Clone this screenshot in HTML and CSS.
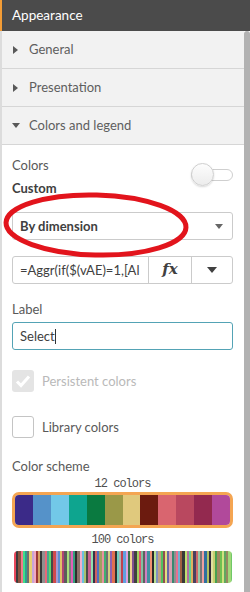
FILE: index.html
```html
<!doctype html>
<html lang="en">
<head>
<meta charset="utf-8">
<title>Appearance</title>
<meta name="viewport" content="width=device-width,initial-scale=1">
<link rel="stylesheet" href="styles.css">
</head>
<body>
<div class="header">Appearance</div>
<div class="main">
  <div class="panel">
    <div class="section"><span class="arrow right"></span>General</div>
    <div class="section"><span class="arrow right"></span>Presentation</div>
    <div class="section"><span class="arrow down"></span>Colors and legend</div>

    <div class="content">
      <div class="colors-head">
        <div>
          <div class="lbl">Colors</div>
          <div class="mode">Custom</div>
        </div>
        <div class="toggle"><span class="knob"></span></div>
      </div>

      <div class="select">By dimension<span class="caret"></span></div>

      <div class="expr">
        <span class="expr-text">=Aggr(if($(vAE)=1,[Al</span>
        <span class="fx">fx</span>
        <span class="expr-drop"><span class="caret big"></span></span>
      </div>

      <div class="lbl label-title">Label</div>
      <div class="text-input">Select<span class="cursor"></span></div>

      <div class="check disabled">
        <span class="box"><svg width="22" height="22" viewBox="0 0 22 22"><path d="M5 11.5l4 4 8-9" fill="none" stroke="#fff" stroke-width="3"/></svg></span>
        Persistent colors
      </div>
      <div class="check lib"><span class="box"></span>Library colors</div>

      <div class="lbl scheme-title">Color scheme</div>
      <div class="caption">12 colors</div>
      <div class="swatch selected" id="c12"></div>
      <div class="caption">100 colors</div>
      <div class="swatch wide" id="c100"></div>
    </div>

    <svg class="ring" width="196" height="72" viewBox="0 0 196 72">
      <ellipse cx="94" cy="35" rx="90" ry="30" fill="none" stroke="#e2141c" stroke-width="5" transform="rotate(1.5 94 35)"/>
    </svg>
  </div>
  <div class="scrollbar"></div>
</div>

<script>
const colors12 = ["#3b2a88","#5592c9","#72c8e8","#0ea58f","#0a7a40","#9a9848","#e0c97d",
  "#6c1b0f","#d9656f","#b9485f","#93294f","#b1499b"];

const colors100 = [
  "#e8485c","#3b3b3b","#8a5440","#f07a8c","#3ee08a","#2f9f8f","#6f6f6f","#e8d070","#c7a4d8","#f0a8c0",
  "#9c3838","#d4a060","#383838","#909090","#e86878","#46a890","#5ad86c","#484848","#d04a4a","#a89ad0",
  "#5a90d0","#e0c068","#b04474","#5c5c5c","#a6e07a","#7c7c7c","#e060b8","#34a07c","#2e2e2e","#8c7068",
  "#f0b0d0","#6ac0e0","#a8c070","#4a4a4a","#c86090","#90e0b0","#383048","#d06060","#5070c0","#a0a060",
  "#e890a0","#40b070","#707070","#d0d080","#9060b0","#e07050","#303030","#70d0c0","#b0b0b0","#c04050",
  "#60a0e0","#e0a0e0","#3c7048","#f0d090","#805090","#404040","#a0d060","#e05070","#80c0a0","#606060",
  "#d080c0","#4090a0","#f09070","#282828","#b8e090","#8090c0","#c0a080","#50c060","#905050","#e0e080",
  "#6868a8","#d8a0b0","#3a8870","#909090","#e87090","#70b0d0","#a06040","#383838","#c0e070","#b070a0",
  "#60d090","#e0b060","#4a4060","#d06868","#98c8a8","#787878","#f0a0a0","#3070a0","#b0c060","#302838",
  "#e0e0a0","#c8d070","#48a050","#a08860","#70c050","#d0e080","#60a860","#988860","#a0d878","#70c868"
];

function fill(id, list) {
  const el = document.getElementById(id);
  for (const c of list) {
    const s = document.createElement("span");
    s.style.background = c;
    el.appendChild(s);
  }
}

fill("c12", colors12);
fill("c100", colors100);
</script>
</body>
</html>
```

FILE: styles.css
```css
body{margin:0;width:250px;height:592px;overflow:hidden;font-family:Lato,"Open Sans",sans-serif;font-size:13px;color:#595959;background:#fff;}

.header{height:31px;line-height:30px;background:#4b4b4b;color:#fff;border-left:2px solid #f39c35;padding-left:10px;font-size:13.5px;box-sizing:border-box;}

.main{display:flex;height:561px;}
.panel{flex:1;position:relative;border-left:2px solid #dcdcdc;background:#fff;}
.scrollbar{width:6px;background:#b2b2b2;border-radius:3px 3px 0 0;}

.section{height:37px;line-height:37px;background:#f2f2f2;border-bottom:1px solid #d6d6d6;padding-left:10px;display:flex;align-items:center;color:#5e5e5e;}
.arrow{width:0;height:0;margin-right:11px;}
.arrow.right{border-left:5px solid #595959;border-top:4px solid transparent;border-bottom:4px solid transparent;margin-left:1px;margin-right:11px;}
.arrow.down{border-top:5px solid #595959;border-left:4px solid transparent;border-right:4px solid transparent;margin-right:9px;}

.content{padding:11px 11px 0 10px;}
.lbl{line-height:18px;}

.colors-head{display:flex;justify-content:space-between;align-items:flex-start;}
.mode{font-weight:700;color:#404040;line-height:18px;margin-top:5px;}
.toggle{position:relative;width:42px;height:23px;margin-top:7px;display:flex;align-items:center;}
.toggle::before{content:"";display:block;width:100%;height:12px;border:1px solid #cfcfcf;border-radius:7px;box-sizing:border-box;background:#fff;}
.knob{position:absolute;left:0;top:0;width:23px;height:23px;border-radius:50%;border:1px solid #cfcfcf;box-sizing:border-box;background:linear-gradient(#fdfdfd,#ececec);box-shadow:0 1px 2px rgba(0,0,0,.15);}

.select{margin-top:15px;height:28px;border:1px solid #cbcbcb;border-radius:3px;box-sizing:border-box;display:flex;align-items:center;justify-content:space-between;padding:0 9px 0 7px;font-weight:700;color:#404040;}
.caret{width:0;height:0;border-top:5px solid #666;border-left:4px solid transparent;border-right:4px solid transparent;}
.caret.big{border-top-width:6px;border-left-width:5px;border-right-width:5px;border-top-color:#404040;}

.expr{margin-top:16px;height:28px;border:1px solid #cbcbcb;border-radius:3px;box-sizing:border-box;display:flex;}
.expr-text{width:135px;padding-left:7px;line-height:26px;white-space:nowrap;overflow:hidden;color:#404040;box-sizing:border-box;}
.fx{width:42px;border-left:1px solid #cbcbcb;text-align:center;font-family:"DejaVu Serif",serif;font-style:italic;font-weight:700;font-size:15px;line-height:25px;color:#404040;}
.expr-drop{flex:1;border-left:1px solid #cbcbcb;display:flex;align-items:center;justify-content:center;}

.label-title{margin-top:16px;}
.text-input{margin-top:4px;height:28px;border:1px solid #54a3b5;border-radius:3px;box-sizing:border-box;padding-left:7px;display:flex;align-items:center;color:#404040;}
.cursor{display:inline-block;width:1px;height:15px;background:#333;}

.check{display:flex;align-items:center;height:22px;}
.box{width:22px;height:22px;border-radius:3px;box-sizing:border-box;margin-right:8px;}
.check.disabled{margin-top:20px;color:#b9b9b9;}
.check.disabled .box{background:#e4e4e4;}
.check.lib{margin-top:24px;}
.check.lib .box{border:1px solid #c4c4c4;background:#fff;}

.scheme-title{margin-top:19px;}
.caption{font-family:"Liberation Mono","DejaVu Sans Mono",monospace;font-size:12px;letter-spacing:-1px;line-height:14px;text-align:center;color:#505050;margin-top:2px;}
#c12 + .caption{margin-top:5px;}

.swatch{display:flex;height:32px;border-radius:5px;overflow:hidden;margin:1px 1px 0 2px;}
.swatch span{flex:1;}
.swatch.selected{height:36px;border:3px solid #f4a552;border-radius:7px;box-sizing:border-box;margin:1px 0 0 0;}
.swatch.wide{margin-top:4px;border-radius:4px;}

.ring{position:absolute;left:0;top:159px;}
```
